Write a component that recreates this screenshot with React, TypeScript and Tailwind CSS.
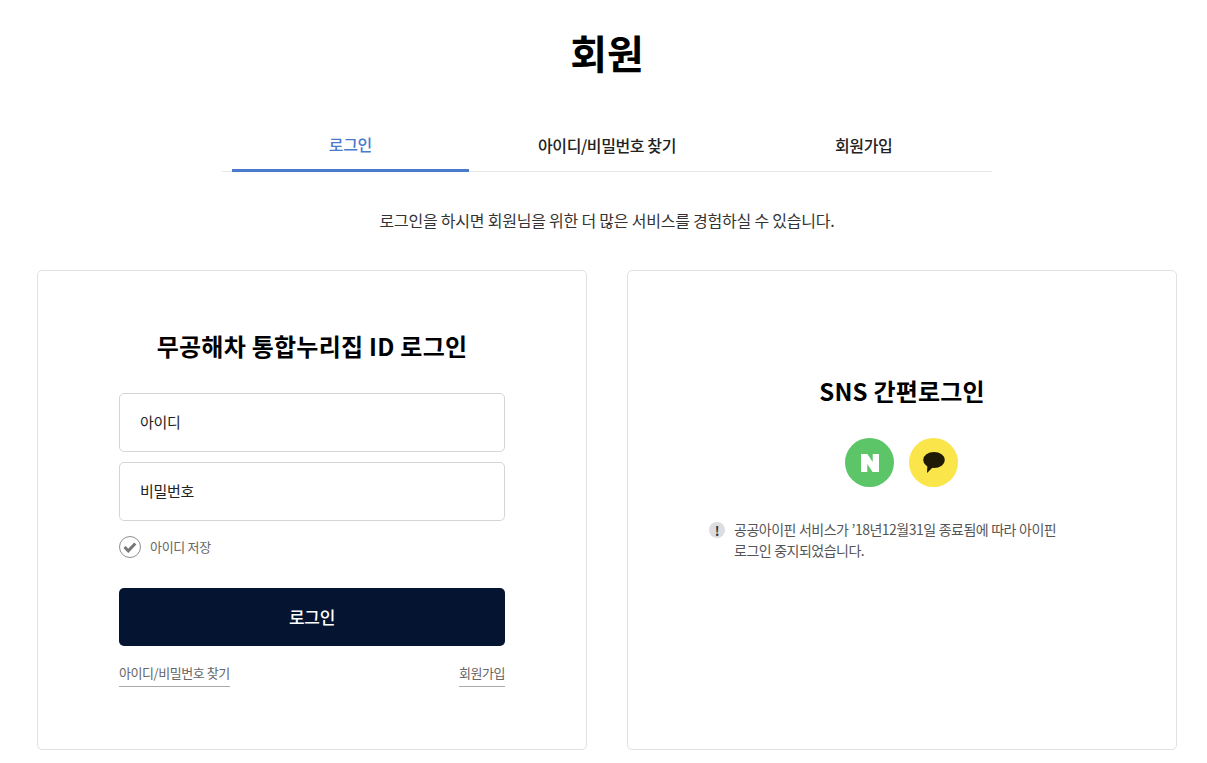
// 회원 로그인 화면
const FONT = "font-['Noto_Sans_CJK_KR','Noto_Sans',sans-serif]";

function NaverIcon() {
  return (
    <svg width="18" height="18" viewBox="0 0 18 18" fill="#fff">
      <path d="M0 0h6.400l5.300 8V0H18v18h-6.400L6.300 10v8H0z" />
    </svg>
  );
}

function KakaoIcon() {
  return (
    <svg width="22" height="21" viewBox="0 0 22 21" fill="#1f1a06">
      <ellipse cx="11" cy="8" rx="10.800" ry="8" />
      <path d="M4.500 12.500L4 20.200c0 .5.300.6.600.3L10 15z" />
    </svg>
  );
}

function CheckCircle() {
  return (
    <svg width="22" height="22" viewBox="0 0 22 22" fill="none">
      <circle cx="11" cy="11" r="10.500" fill="#fff" stroke="#8f8f8f" />
      <path d="M5.500 11l3.800 3.800 7-7.300" stroke="#777" strokeWidth="3" />
    </svg>
  );
}

function Tab({ label, active }: { label: string; active?: boolean }) {
  return (
    <div className="flex-1 px-[10px]">
      <div
        className={
          active
            ? "h-[50px] pb-[4px] flex items-center justify-center border-b-[3px] border-[#4a7acb] text-[#4a7acb] text-[16px] tracking-[-0.4px] font-medium"
            : "h-[50px] pb-[4px] flex items-center justify-center text-[#222] text-[16px] tracking-[-0.4px] font-medium"
        }
      >
        {label}
      </div>
    </div>
  );
}

function Field({ label }: { label: string }) {
  return (
    <div className="h-[59px] border border-[#d5d5d5] rounded-[5px] flex items-center px-[20px] text-[15px] tracking-[-0.3px] text-[#222]">
      {label}
    </div>
  );
}

export default function App() {
  return (
    <div className={`${FONT} bg-white min-h-[763px] overflow-hidden`}>
      <div className="w-[1140px] ml-[37px]">
        <h1 className="text-center text-[40px] leading-[60px] font-bold text-black pt-[22px]">회원</h1>

        <div className="w-[770px] mx-auto mt-[40px] flex border-b border-[#e8e8e8] h-[50px]">
          <Tab label="로그인" active />
          <Tab label="아이디/비밀번호 찾기" />
          <Tab label="회원가입" />
        </div>

        <p className="text-center text-[16px] tracking-[-0.22px] leading-[24px] text-[#333] mt-[36px]">
          로그인을 하시면 회원님을 위한 더 많은 서비스를 경험하실 수 있습니다.
        </p>

        <div className="grid grid-cols-2 gap-[40px] mt-[38px]">
          <section className="h-[480px] border border-[#e2e2e2] rounded-[5px] px-[81px] pt-[55px]">
            <h2 className="text-center text-[24px] tracking-[0.25px] leading-[40px] font-bold text-black">
              무공해차 통합누리집 ID 로그인
            </h2>
            <div className="mt-[27px] flex flex-col gap-[10px]">
              <Field label="아이디" />
              <Field label="비밀번호" />
            </div>
            <div className="mt-[15px] flex items-center gap-[9px] text-[13px] tracking-[-0.3px] leading-[22px] text-[#666]">
              <CheckCircle />
              <span className="-mt-[1px]">아이디 저장</span>
            </div>
            <button className="mt-[30px] w-full h-[58px] bg-[#051531] rounded-[5px] text-white text-[17px] tracking-[-0.3px] font-medium">
              로그인
            </button>
            <div className="mt-[16px] flex justify-between text-[13px] tracking-[-0.45px] text-[#666]">
              <a className="h-[25px] leading-[22px] border-b border-[#aaa]">아이디/비밀번호 찾기</a>
              <a className="h-[25px] leading-[22px] border-b border-[#aaa]">회원가입</a>
            </div>
          </section>

          <section className="h-[480px] border border-[#e2e2e2] rounded-[5px] pt-[100px]">
            <h2 className="text-center text-[24px] tracking-[0.2px] leading-[40px] font-bold text-black">
              SNS 간편로그인
            </h2>
            <div className="mt-[27px] pr-[1px] flex justify-center gap-[15px]">
              <div className="w-[49px] h-[49px] rounded-full bg-[#5bc567] flex items-center justify-center">
                <NaverIcon />
              </div>
              <div className="w-[49px] h-[49px] rounded-full bg-[#fae54a] flex items-center justify-center">
                <KakaoIcon />
              </div>
            </div>
            <div className="mt-[31px] ml-[81px] flex gap-[9px] text-[14px] tracking-[-0.5px] [word-spacing:0.4px] leading-[21px] text-[#555]">
              <span className="mt-[4px] w-[16px] h-[16px] shrink-0 rounded-full bg-[#dcdde0] flex items-center justify-center text-[13px] font-bold text-[#333]">
                !
              </span>
              <p className="w-[330px] pt-[1px]">
                공공아이핀 서비스가 ’18년12월31일 종료됨에 따라 아이핀 로그인 중지되었습니다.
              </p>
            </div>
          </section>
        </div>
      </div>
    </div>
  );
}
